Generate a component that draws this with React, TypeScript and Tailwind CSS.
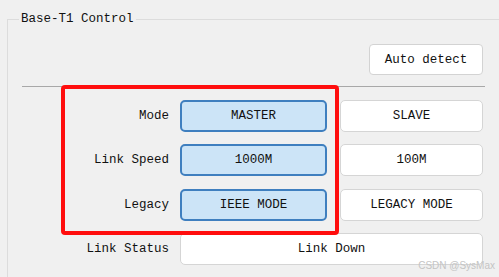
export default function App() {
  const rows = [
    { label: "Mode", on: "MASTER", off: "SLAVE" },
    { label: "Link Speed", on: "1000M", off: "100M" },
    { label: "Legacy", on: "IEEE MODE", off: "LEGACY MODE" },
  ];

  return (
    <div className="relative w-[499px] h-[277px] overflow-hidden bg-[#f0f0f0] text-[12.5px] leading-[16px] text-[#111] font-['Liberation_Mono',monospace]">
      <div className="relative ml-[7px] mt-[19px] h-[300px] border-l border-t border-[#dcdcdc]">
        <span className="absolute -top-[9px] left-[11px] bg-[#f0f0f0] px-[2px]">Base-T1 Control</span>

        <div className="flex justify-end pt-[24px] pr-[16px]">
          <button className="h-[31px] w-[114px] rounded-[4px] border border-[#d3d3d3] bg-white">Auto detect</button>
        </div>

        <div className="mt-[11px] ml-[14px] mr-[14px] h-px bg-[#a8a8a8]" />

        <div className="mt-[13px] flex flex-col gap-[12.4px]">
          {rows.map((r) => (
            <div key={r.label} className="flex items-center">
              <div className="w-[161px] text-right">{r.label}</div>
              <button className="ml-[11px] h-[32px] w-[147px] rounded-[5px] border-2 border-[#3f7fbf] bg-[#cce4f7]">{r.on}</button>
              <button className="ml-[13px] h-[32px] w-[143px] rounded-[5px] border border-[#d5d5d5] bg-white">{r.off}</button>
            </div>
          ))}
          <div className="flex items-center">
            <div className="w-[161px] text-right">Link Status</div>
            <button className="ml-[11px] h-[32px] w-[303px] rounded-[5px] border border-[#d5d5d5] bg-white">Link Down</button>
          </div>
        </div>
      </div>

      <div className="absolute left-[61px] top-[85px] h-[150px] w-[278px] rounded-[4px] border-[4px] border-[#ff0d0d]" />

      <span className="absolute right-[4px] bottom-[5px] text-[10px] leading-[12px] text-[#c4c4c4] font-['Liberation_Sans',sans-serif]">CSDN @SysMax</span>
    </div>
  );
}
